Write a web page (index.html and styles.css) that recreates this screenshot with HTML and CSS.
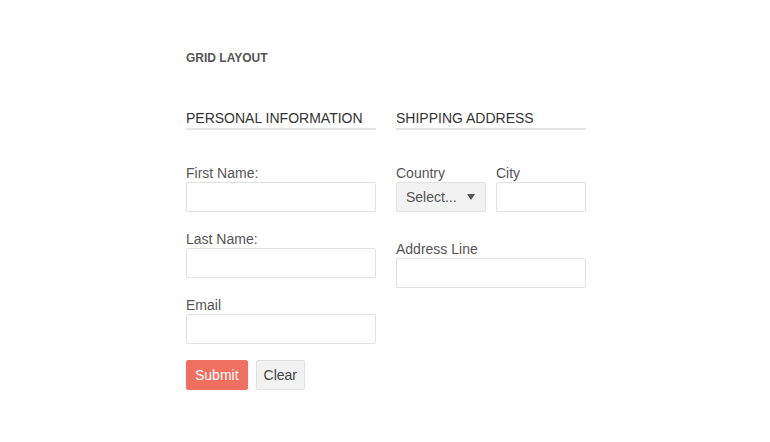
FILE: index.html
```html
<!DOCTYPE html>
<html lang="en">
<head>
  <meta charset="UTF-8">
  <title>Grid Layout</title>
  <link rel="stylesheet" href="styles.css">
</head>
<body>
  <div class="page">
    <h4 class="title">GRID LAYOUT</h4>

    <form class="form-grid">
      <div class="column">
        <h3 class="section-heading">PERSONAL INFORMATION</h3>
        <div class="field">
          <label>First Name:</label>
          <input type="text" class="input">
        </div>
        <div class="field">
          <label>Last Name:</label>
          <input type="text" class="input">
        </div>
        <div class="field">
          <label>Email</label>
          <input type="text" class="input">
        </div>
        <div class="actions">
          <button type="button" class="btn btn-primary">Submit</button>
          <button type="button" class="btn btn-default">Clear</button>
        </div>
      </div>

      <div class="column">
        <h3 class="section-heading">SHIPPING ADDRESS</h3>
        <div class="field-row">
          <div class="field">
            <label>Country</label>
            <div class="select">
              <span>Select...</span>
              <span class="caret"></span>
            </div>
          </div>
          <div class="field">
            <label>City</label>
            <input type="text" class="input">
          </div>
        </div>
        <div class="field address">
          <label>Address Line</label>
          <input type="text" class="input">
        </div>
      </div>
    </form>
  </div>
</body>
</html>
```

FILE: styles.css
```css
body {
  margin: 0;
  background: #fff;
  font-family: "Liberation Sans", Arial, sans-serif;
  color: #555;
}

.page {
  padding: 51px 0 0 186px;
}

.title {
  margin: 0;
  font-size: 12px;
  line-height: 14px;
  font-weight: bold;
  color: #555;
}

.form-grid {
  display: flex;
  gap: 20px;
  margin-top: 44px;
}

.column {
  width: 190px;
}

.section-heading {
  margin: 0 0 35px;
  font-size: 14px;
  line-height: 18px;
  font-weight: normal;
  color: #333;
  padding-bottom: 1px;
  border-bottom: 2px solid #e6e6e6;
}

.field {
  display: flex;
  flex-direction: column;
  margin-bottom: 19px;
}

.field label {
  font-size: 14px;
  line-height: 17px;
  color: #555;
}

.input {
  box-sizing: border-box;
  width: 100%;
  height: 30px;
  margin: 0;
  border: 1px solid #e1e1e1;
  border-radius: 2px;
  background: #fff;
  font: inherit;
}

.field-row {
  display: flex;
  gap: 10px;
  margin-bottom: 10px;
}

.field-row .field {
  width: 90px;
}

.select {
  box-sizing: border-box;
  height: 30px;
  display: flex;
  align-items: center;
  justify-content: space-between;
  padding: 0 10px 0 9px;
  background: #f2f2f2;
  border: 1px solid #e1e1e1;
  border-radius: 2px;
  font-size: 14px;
  color: #555;
}

.caret {
  width: 0;
  height: 0;
  border-left: 4px solid transparent;
  border-right: 4px solid transparent;
  border-top: 6px solid #555;
}

.actions {
  display: flex;
  gap: 8px;
  margin-top: -3px;
}

.btn {
  height: 30px;
  border-radius: 2px;
  font-family: inherit;
  font-size: 14px;
  cursor: pointer;
}

.btn-primary {
  padding: 0 8px;
  background: #ef6f60;
  border: 1px solid #ef6f60;
  color: #fff;
}

.btn-default {
  padding: 0 7px;
  background: #f2f2f2;
  border: 1px solid #e1e1e1;
  color: #444;
}
```
